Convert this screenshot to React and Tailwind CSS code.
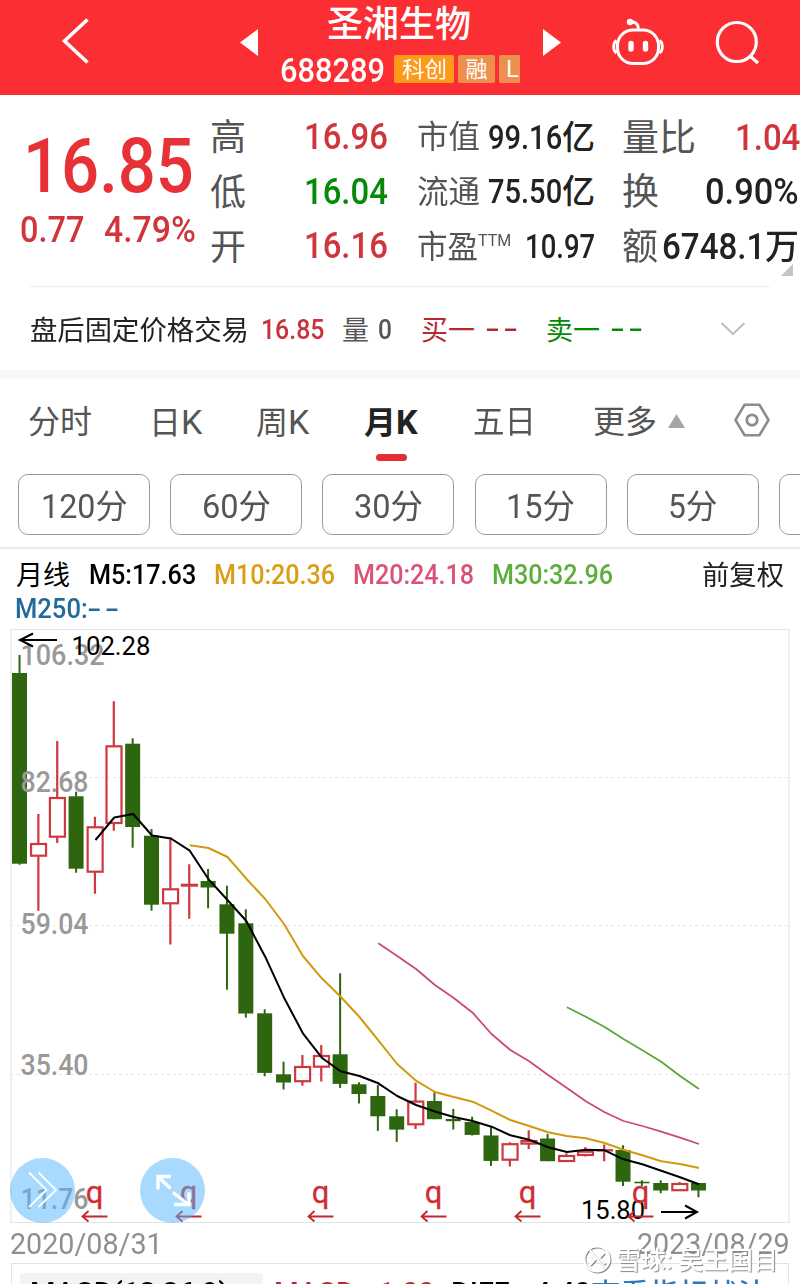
import { useLayoutEffect, useRef, useState } from "react";

const STEP = 18.86;
const cx = (i) => 19.5 + STEP * i;

// [type, high, bodyTop, bodyBottom, low]
const candles = [
  ["g", 655, 673, 863.7, 864.7],
  ["r", 814, 844, 855.7, 910.7],
  ["r", 741, 798, 836.7, 843],
  ["g", 791.7, 796.3, 868.7, 872.7],
  ["r", 816.7, 827.3, 871.7, 893.7],
  ["r", 701.3, 746.3, 823, 830.7],
  ["g", 738.3, 743.7, 827, 847.7],
  ["g", 829, 835.7, 904.7, 910.7],
  ["r", 837.3, 889.3, 903.3, 944.5],
  ["r", 864.3, 884.8, 885.6, 918.7],
  ["g", 869, 881, 887.5, 908.3],
  ["g", 885.7, 904.3, 933.7, 989.7],
  ["g", 909.3, 923.3, 1013.5, 1017.7],
  ["g", 1009.3, 1013.3, 1072.9, 1076.3],
  ["g", 1061.7, 1074.3, 1082.5, 1089.5],
  ["r", 1055, 1067, 1081.2, 1085.7],
  ["r", 1045, 1056, 1066.7, 1081.5],
  ["g", 973.3, 1054.3, 1083.9, 1087.9],
  ["g", 1082.3, 1084.3, 1094, 1103.5],
  ["g", 1085, 1096, 1116.3, 1130.9],
  ["g", 1109.3, 1116.3, 1129.6, 1141.9],
  ["r", 1082.7, 1101.6, 1124.3, 1129],
  ["g", 1092.3, 1101, 1119.2, 1119.2],
  ["g", 1109, 1119, 1121.2, 1129.5],
  ["g", 1116.7, 1122, 1134.9, 1135.5],
  ["g", 1126.7, 1135.5, 1160.9, 1165.9],
  ["r", 1142.3, 1144.2, 1159.7, 1166.5],
  ["r", 1130.3, 1141, 1143.6, 1149],
  ["g", 1134, 1138.5, 1161.2, 1161.2],
  ["r", 1153.3, 1156, 1161, 1161],
  ["r", 1147.3, 1151.7, 1155, 1156.6],
  ["r", 1144.5, 1150.2, 1150.4, 1161.2],
  ["g", 1145.3, 1150, 1181.7, 1186],
  ["g", 1180.3, 1181.7, 1183.3, 1185.9],
  ["g", 1180.3, 1183, 1190.5, 1193.2],
  ["r", 1182, 1184, 1190.2, 1190.2],
  ["g", 1183, 1183, 1190.5, 1197.2],
];

const averages = [
  {
    start: 29,
    color: "#5ba63a",
    width: 1.8,
    ys: [1007.3, 1016.7, 1027, 1039, 1050.3, 1061.7, 1076, 1089],
  },
  {
    start: 19,
    color: "#cb4b6d",
    width: 1.8,
    ys: [943.3, 956, 969, 985, 998, 1012.7, 1034, 1050, 1061.3, 1075, 1088, 1101.3, 1112.3, 1121, 1126, 1131.7, 1137.7, 1144],
  },
  {
    start: 9,
    color: "#d2990f",
    width: 2,
    ys: [845.3, 848, 857, 878.7, 899, 924, 956, 978.3, 996.7, 1017, 1040.3, 1064, 1080.7, 1092, 1097, 1101.7, 1110.7, 1120, 1126, 1132.3, 1136, 1138.3, 1143, 1149.7, 1155.3, 1161.3, 1164, 1168],
  },
  {
    start: 4,
    color: "#000",
    width: 2,
    ys: [840, 817.5, 814, 835.5, 838.5, 850.7, 879.3, 900, 921, 956.7, 997.7, 1033.3, 1057.7, 1071.3, 1076, 1083.3, 1096, 1105, 1111.5, 1117, 1121, 1126.7, 1135.3, 1139.7, 1147.3, 1152, 1149.7, 1150.3, 1159.3, 1164.3, 1170.7, 1177.3, 1184.3],
  },
];

const axisLabels = [
  { text: "106.32", y: 665, w: 84 },
  { text: "82.68", y: 792.3, w: 68 },
  { text: "59.04", y: 933.5, w: 68 },
  { text: "35.40", y: 1075, w: 68 },
  { text: "11.76", y: 1209, w: 68 },
];

// Squeezes a single line of text to the width of its box
const Fit = ({ children, className = "" }) => {
  const box = useRef(null);
  const line = useRef(null);
  const [scale, setScale] = useState(1);

  useLayoutEffect(() => {
    setScale(box.current.clientWidth / line.current.offsetWidth);
  }, []);

  return (
    <span ref={box} className={`block shrink-0 leading-none ${className}`}>
      <span
        ref={line}
        className="inline-block whitespace-nowrap origin-left align-top"
        style={{ transform: `scaleX(${scale})` }}
      >
        {children}
      </span>
    </span>
  );
};

const Header = () => (
  <header className="flex h-[95px] items-start bg-[#fb2e34] text-white">
    <svg className="ml-[60px] mt-[16px] h-[50px] w-[30px] shrink-0" viewBox="0 0 30 50" fill="none">
      <path d="M27.5 3.5 4.5 25l23 21.5" stroke="#fff" strokeWidth="3.6" />
    </svg>
    <svg className="ml-[150px] mt-[29px] h-[27px] w-[18px] shrink-0" viewBox="0 0 18 27">
      <path d="M18 0v27L0 13.5z" fill="#fff" />
    </svg>
    <div className="ml-[22px] flex w-[240px] shrink-0 flex-col">
      <Fit className="ml-[47px] mt-[7px] w-[144px] text-[36px] font-medium">圣湘生物</Fit>
      <div className="mt-[12px] flex h-[28px] items-center">
        <Fit className="mt-px w-[105px] text-[34px] font-medium">688289</Fit>
        <span className="ml-[9px] flex h-[28px] w-[60px] shrink-0 items-center justify-center rounded-[2px] bg-[#fd9a1c]">
          <Fit className="mt-[2px] w-[45px] text-[22px]">科创</Fit>
        </span>
        <span className="ml-[4px] flex h-[28px] w-[37px] shrink-0 items-center justify-center rounded-[2px] bg-[#ed8f4d]">
          <Fit className="mt-[2px] w-[22px] text-[22px]">融</Fit>
        </span>
        <span className="ml-[4px] flex h-[28px] w-[21px] shrink-0 items-center rounded-l-[2px] bg-[#ed8f4d] pl-[7px]">
          <Fit className="w-[13px] text-[24px]">L</Fit>
        </span>
      </div>
    </div>
    <svg className="ml-[23px] mt-[29px] h-[27px] w-[18px] shrink-0" viewBox="0 0 18 27">
      <path d="M0 0v27l18-13.500z" fill="#fff" />
    </svg>
    <svg className="ml-[51px] mt-[17px] h-[50px] w-[52px] shrink-0" viewBox="0 0 52 50" fill="none" stroke="#fff">
      <rect x="5.500" y="13" width="41" height="33.500" rx="15.500" strokeWidth="3" />
      <path d="M26.500 12.500C26.500 7 23.500 4.800 18.500 4.800" strokeWidth="3" />
      <circle cx="18" cy="5" r="3.200" fill="#fff" stroke="none" />
      <path d="M4.500 23.500C.8 25.500.8 34 4.500 36M47.500 23.500c3.700 2 3.700 10.500 0 12.500" strokeWidth="3" />
      <path d="M19 26.500v5.500M33.500 26.500v5.500" strokeWidth="5.400" strokeLinecap="round" />
    </svg>
    <svg className="ml-[50px] mt-[18px] h-[48px] w-[48px] shrink-0" viewBox="0 0 48 48" fill="none" stroke="#fff" strokeWidth="3.200">
      <circle cx="22.800" cy="24" r="19.500" />
      <path d="m35.500 37.500 8.500 7.500" />
    </svg>
  </header>
);

const Quote = () => (
  <section className="relative flex h-[191px] pt-[15px]">
    <div className="w-[210px] shrink-0 pt-[18px] text-[#e63237]">
      <div className="flex h-[76px] items-center pl-[23px]">
        <Fit className="w-[171px] text-[76px] font-medium">16.85</Fit>
      </div>
      <div className="flex h-[52px] items-center pl-[20px] text-[36px] font-medium text-[#cf353b]">
        <Fit className="w-[64px]">0.77</Fit>
        <Fit className="ml-[20px] w-[92px]">4.79%</Fit>
      </div>
    </div>

    <div className="w-[207px] shrink-0 text-[36px] text-[#555]">
      <div className="flex h-[54px] items-center">
        <Fit className="mt-[2px] w-[36px]">高</Fit>
        <Fit className="ml-[58px] w-[84px] font-medium text-[#cf353b]">16.96</Fit>
      </div>
      <div className="flex h-[55px] items-center">
        <Fit className="mt-[3px] w-[36px]">低</Fit>
        <Fit className="ml-[58px] w-[84px] font-medium text-[#048a04]">16.04</Fit>
      </div>
      <div className="flex h-[54px] items-center">
        <Fit className="mt-[3px] w-[36px]">开</Fit>
        <Fit className="ml-[58px] w-[84px] font-medium text-[#cf353b]">16.16</Fit>
      </div>
    </div>

    <div className="w-[205px] shrink-0 text-[32px] text-[#555]">
      <div className="flex h-[54px] items-center">
        <Fit className="w-[63px]">市值</Fit>
        <Fit className="ml-[8px] w-[74px] text-[33px] font-medium text-[#222]">99.16</Fit>
        <Fit className="w-[33px] text-[33px] font-medium text-[#222]">亿</Fit>
      </div>
      <div className="flex h-[55px] items-center">
        <Fit className="w-[63px]">流通</Fit>
        <Fit className="ml-[8px] w-[74px] text-[33px] font-medium text-[#222]">75.50</Fit>
        <Fit className="w-[33px] text-[33px] font-medium text-[#222]">亿</Fit>
      </div>
      <div className="flex h-[54px] items-center">
        <Fit className="mt-px w-[61px]">市盈</Fit>
        <Fit className="mb-[11px] w-[33px] text-[17px]">TTM</Fit>
        <Fit className="ml-[14px] w-[70px] text-[33px] font-medium text-[#222]">10.97</Fit>
      </div>
    </div>

    <div className="w-[178px] shrink-0 text-[37px] text-[#555]">
      <div className="flex h-[54px] items-center">
        <Fit className="mt-[2px] w-[74px]">量比</Fit>
        <Fit className="ml-[39px] w-[65px] text-[37px] font-medium text-[#cf353b]">1.04</Fit>
      </div>
      <div className="flex h-[55px] items-center">
        <Fit className="mt-[2px] w-[37px]">换</Fit>
        <Fit className="ml-[46px] w-[94px] text-[37px] font-medium text-[#222]">0.90%</Fit>
      </div>
      <div className="flex h-[54px] items-center">
        <Fit className="mt-[2px] w-[36px]">额</Fit>
        <Fit className="ml-[4px] w-[103px] text-[37px] font-medium text-[#222]">6748.1</Fit>
        <Fit className="mt-[2px] w-[34px] text-[35px] font-medium text-[#222]">万</Fit>
      </div>
    </div>

    <svg className="absolute right-[7px] top-[169px] h-[12px] w-[12px]" viewBox="0 0 12 12">
      <path d="M12 0v12H0z" fill="#c4c4c4" />
    </svg>
  </section>
);

const AfterHours = () => (
  <section className="h-[84px]">
    <div className="mx-[30px] h-px bg-[#eee]" />
    <div className="flex h-[85px] items-center text-[27px]">
      <Fit className="ml-[30px] mt-[4px] w-[219px] text-[#222]">盘后固定价格交易</Fit>
      <Fit className="ml-[12px] mt-px w-[63px] text-[28px] font-medium text-[#c8333a]">16.85</Fit>
      <Fit className="ml-[18px] mt-[4px] w-[27px] text-[#555]">量</Fit>
      <Fit className="ml-[9px] mt-px w-[14px] text-[28px] font-medium text-[#555]">0</Fit>
      <Fit className="ml-[29px] mt-[4px] w-[54px] text-[#b5282d]">买一</Fit>
      <Fit className="ml-[11px] -mt-[4px] w-[37px] text-[34px] tracking-[4px] text-[#b5282d]">--</Fit>
      <Fit className="ml-[23px] mt-[4px] w-[54px] text-[#048a04]">卖一</Fit>
      <Fit className="ml-[11px] -mt-[4px] w-[37px] text-[34px] tracking-[4px] text-[#048a04]">--</Fit>
      <svg className="-mt-[2px] ml-[72px] h-[16px] w-[26px]" viewBox="0 0 26 16" fill="none">
        <path d="m1.500 2 11.500 11L24.500 2" stroke="#c0c0c0" strokeWidth="2.200" />
      </svg>
    </div>
  </section>
);

const PeriodTabs = () => (
  <nav className="flex h-[95px] pt-[4px] text-[32px] text-[#555]">
    <Fit className="ml-[28px] mt-[23px] w-[64px]">分时</Fit>
    <Fit className="ml-[57px] mt-[22px] w-[53px]">日<span className="text-[34px]">K</span></Fit>
    <Fit className="ml-[54px] mt-[22px] w-[53px]">周<span className="text-[34px]">K</span></Fit>
    <div className="ml-[55px] flex w-[54px] shrink-0 flex-col items-center pt-[22px]">
      <Fit className="h-[32px] w-[54px] font-bold text-[#222]">月<span className="text-[34px]">K</span></Fit>
      <span className="mt-[17px] h-[7px] w-[31px] rounded-full bg-[#e42d32]" />
    </div>
    <Fit className="ml-[55px] mt-[23px] w-[63px]">五日</Fit>
    <Fit className="ml-[57px] mt-[23px] w-[64px]">更多</Fit>
    <svg className="ml-[11px] mt-[31px] h-[14px] w-[17px] shrink-0" viewBox="0 0 17 14">
      <path d="M8.500 0 17 14H0z" fill="#a5a5a5" />
    </svg>
    <svg className="ml-[49px] mt-[20px] h-[34px] w-[36px] shrink-0" viewBox="0 0 36 34" fill="none" stroke="#8c8c8c" strokeWidth="2.600">
      <path d="M10.500 1.800h15L34.500 17l-9 15.200h-15L1.500 17z" strokeLinejoin="round" />
      <circle cx="18" cy="17" r="5.200" strokeWidth="2.800" />
    </svg>
  </nav>
);

const minuteBox = "flex h-[61px] w-[132px] shrink-0 items-center justify-center rounded-[10px] border border-[#9c9c9c] pt-[4px]";

const MinuteRow = () => (
  <div className="flex h-[75px] gap-[20.2px] overflow-hidden border-b-2 border-[#ececec] pl-[18px] text-[33px] text-[#555]">
    <div className={minuteBox}><Fit className="w-[87px]">120分</Fit></div>
    <div className={minuteBox}><Fit className="w-[69px]">60分</Fit></div>
    <div className={minuteBox}><Fit className="w-[69px]">30分</Fit></div>
    <div className={minuteBox}><Fit className="w-[69px]">15分</Fit></div>
    <div className={minuteBox}><Fit className="w-[50px]">5分</Fit></div>
    <div className={minuteBox} />
  </div>
);

const Legend = () => (
  <div className="h-[79px] pt-[9px] text-[28px] font-medium">
    <div className="flex h-[34px] items-center">
      <Fit className="ml-[16px] mt-[2px] w-[54px] text-[27px] font-normal text-black">月线</Fit>
      <Fit className="ml-[19px] w-[107px] text-black">M5:17.63</Fit>
      <Fit className="ml-[18px] w-[121px] text-[#dc9d16]">M10:20.36</Fit>
      <Fit className="ml-[18px] w-[121px] text-[#da5275]">M20:24.18</Fit>
      <Fit className="ml-[18px] w-[121px] text-[#5caf3a]">M30:32.96</Fit>
      <Fit className="ml-[89px] mt-[2px] w-[82px] text-[27px] font-normal text-[#222]">前复权</Fit>
    </div>
    <div className="flex h-[34px] items-center text-[#226a9c]">
      <Fit className="ml-[15px] w-[73px]">M250:</Fit>
      <Fit className="-mt-[3px] w-[36px] text-[34px] font-normal tracking-[4px]">--</Fit>
    </div>
  </div>
);

const Candle = ({ index, data }) => {
  const [type, high, top, bottom, low] = data;
  const x = cx(index);

  if (type === "g") {
    return (
      <g fill="#2d660f">
        <rect x={x - 1} y={high} width="2" height={low - high} />
        <rect x={x - 7.5} y={top} width="15" height={bottom - top} />
      </g>
    );
  }

  return (
    <g fill="none" stroke="#cc3a40" strokeWidth="2.2">
      <path d={`M${x} ${high}V${top}M${x} ${bottom}V${low}`} />
      <rect x={x - 7.3} y={top} width="15" height={bottom - top} />
    </g>
  );
};

const Chart = () => (
  <svg className="block h-[596px] w-[800px]" viewBox="0 628 800 596" fill="none">
    <rect x="11" y="629.500" width="778" height="593" stroke="#e2e2e2" />
    <path d="M11 777.500h778M11 925.500h778M11 1074.500h778" stroke="#e6e6e6" strokeDasharray="3 3" />

    {candles.map((c, i) => (
      <Candle key={i} index={i} data={c} />
    ))}

    {averages.map((avg) => (
      <polyline
        key={avg.start}
        points={avg.ys.map((y, i) => `${cx(avg.start + i) + 0.5},${y}`).join(" ")}
        stroke={avg.color}
        strokeWidth={avg.width}
        strokeLinejoin="round"
      />
    ))}

    {axisLabels.map((l) => (
      <text key={l.text} x="20.500" y={l.y} textLength={l.w} lengthAdjust="spacingAndGlyphs" fontSize="29" fontWeight="500" fill="#999">
        {l.text}
      </text>
    ))}

    {/* highest / lowest price markers */}
    <g stroke="#000" strokeWidth="2">
      <path d="M57 640H20M33 633.500 20 640l13 6.500" />
      <path d="M661 1212h36M685 1205.500l12 6.500-12 6.500" />
    </g>
    <g fill="#000" fontSize="25">
      <text x="71.500" y="655.300" textLength="79" lengthAdjust="spacingAndGlyphs">102.28</text>
      <text x="581" y="1218.700" textLength="64" lengthAdjust="spacingAndGlyphs">15.80</text>
    </g>

    {/* ex-rights marks */}
    {[94.5, 188.5, 320.5, 433.5, 527.5, 640.5].map((x) => (
      <g key={x}>
        <text x={x} y="1203" textAnchor="middle" fontSize="31" fill="#cf2f33" stroke="#cf2f33" strokeWidth="0.3">q</text>
        <path d={`M${x + 13} 1216.500H${x - 12}m6-5.500-6 5.500 6 5`} stroke="#c1272d" strokeWidth="1.800" />
      </g>
    ))}

    <g fill="#51b5ff" fillOpacity="0.5">
      <circle cx="42.500" cy="1190.500" r="32.500" />
      <circle cx="172.500" cy="1190.500" r="32.500" />
    </g>
    <path d="M29 1172.500l17.500 17.500L29 1207M38.500 1172.500 56 1190l-17.500 17" stroke="#fff" strokeWidth="1.800" />
    <path d="M171 1176.500h-13v13M159 1177.500l11.500 11M174 1204.500h15v-12M173 1192.500l14.500 11" stroke="#fff" strokeWidth="3.400" />
  </svg>
);

const Dates = () => (
  <div className="flex h-[39px] items-center justify-between pl-[10px] pr-[10px] pt-px text-[30px] text-[#8f8f8f]">
    <Fit className="w-[153px]">2020/08/31</Fit>
    <Fit className="w-[153px]">2023/08/29</Fit>
  </div>
);

const MacdRow = () => (
  <div className="mx-[11px] flex h-[40px] border border-[#e2e2e2] pt-[9px] text-[27px] font-medium">
    <div className="ml-[8px] h-[30px] w-[243px] shrink-0 rounded-t-[4px] bg-[#f5f2f3] pl-[10px] pt-[7px] text-black">
      <Fit className="w-[198px]">MACD(12,26,9)</Fit>
    </div>
    <Fit className="ml-[11px] mt-[7px] w-[160px] text-[#c1272d]">MACD: -1.00</Fit>
    <Fit className="ml-[17px] mt-[7px] w-[66px] text-black">DIFF:</Fit>
    <Fit className="ml-[8px] mt-[7px] w-[66px] text-black">-4.40</Fit>
    <Fit className="mt-[8px] w-[176px] text-[28px] text-[#2f78bd]">查看指标战法</Fit>
  </div>
);

const Watermark = () => (
  <div className="absolute left-[583px] top-[1245px] flex items-center text-white">
    <svg className="h-[30px] w-[30px] drop-shadow-[1px_1px_0.500px_#888]" viewBox="0 0 30 30" fill="none" stroke="#fff" strokeWidth="2">
      <circle cx="14" cy="14" r="12.500" />
      <path d="m7 10 5 4.500L7 20M21 8l-5 5 6 6M7 5l14 18" />
    </svg>
    <Fit className="ml-[3px] w-[162px] text-[25px] font-medium [text-shadow:1px_1px_1px_#888]">雪球: 吴王国目</Fit>
  </div>
);

export default function App() {
  return (
    <div className="relative h-[1284px] w-[800px] overflow-hidden bg-white font-[Roboto,'Noto_Sans_CJK_SC',sans-serif]">
      <Header />
      <Quote />
      <AfterHours />
      <div className="h-[9px] bg-[#f7f7f7]" />
      <PeriodTabs />
      <MinuteRow />
      <Legend />
      <Chart />
      <Dates />
      <MacdRow />
      <Watermark />
    </div>
  );
}
